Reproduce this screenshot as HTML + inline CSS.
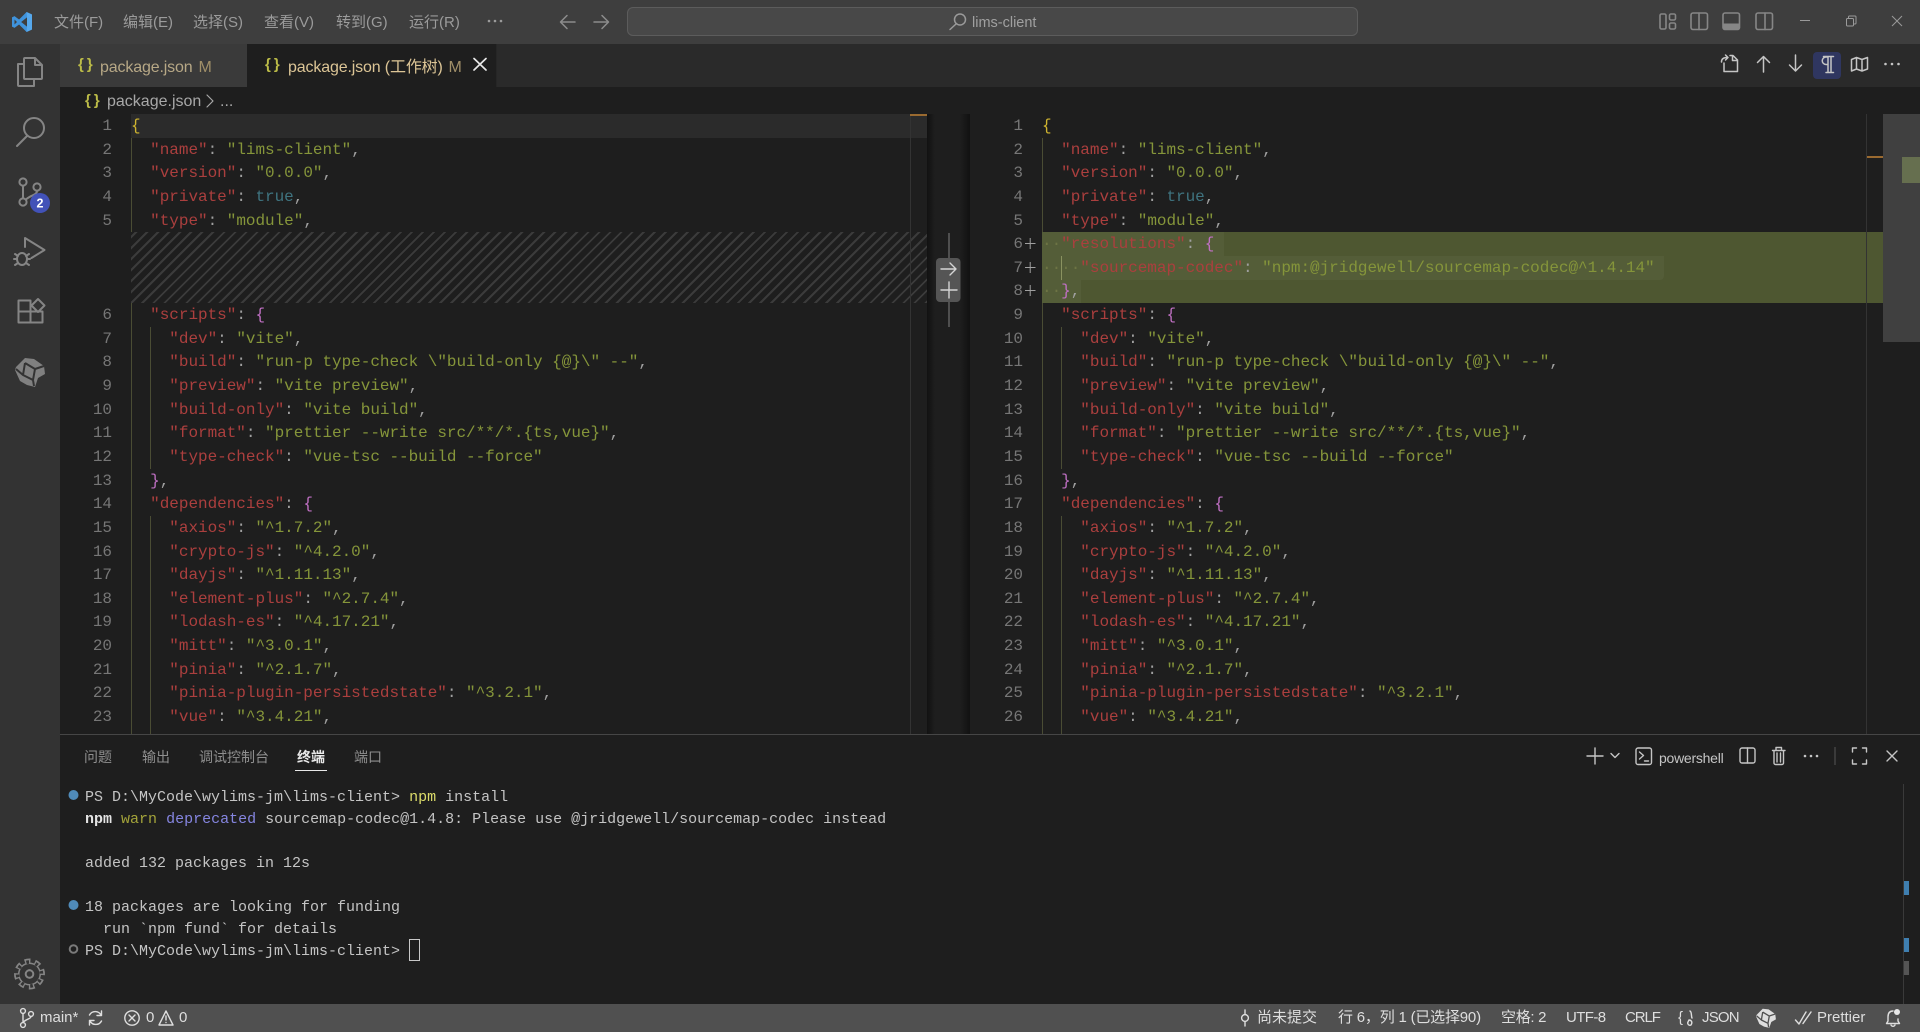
<!DOCTYPE html>
<html lang="zh">
<head>
<meta charset="utf-8">
<title>package.json - lims-client</title>
<style>
html,body{margin:0;padding:0;width:1920px;height:1032px;overflow:hidden;background:#1e1e1e}
body{position:relative;font-family:"Liberation Sans","Noto Sans CJK SC",sans-serif;color:#ccc}
.a{position:absolute;white-space:pre}
#title{left:0;top:0;width:1920px;height:44px;background:#3e3e3e}
#act{left:0;top:44px;width:60px;height:960px;background:#333}
#tabs{left:60px;top:44px;width:1860px;height:43px;background:#2a2a2a}
#t1{left:60px;top:44px;width:187px;height:43px;background:#3a3a3a}
#t2{left:247px;top:44px;width:250px;height:43px;background:#1e1e1e;border-right:1px solid #262626;box-sizing:border-box}
#status{left:0;top:1004px;width:1920px;height:28px;background:#505050}
.m{top:12px;font-size:15px;line-height:22px;color:#9b9b9b}
.tb{top:57px;font-size:16px;line-height:22px}
.br{top:91px;font-size:16px;line-height:22px;color:#a8a8a8}
.ic{font-family:"Liberation Sans",sans-serif;font-weight:bold;font-size:15px;letter-spacing:3px;color:#bcbc48}
.st{top:1007px;font-size:15px;line-height:22px;color:#dedede}
.pt{top:747px;font-size:14px;line-height:20px;color:#8f8f8f}
.ed{position:absolute;top:114px;height:620px;overflow:hidden;font-family:"Liberation Mono",monospace;font-size:16px;letter-spacing:-.03px;color:#a0a0a0}
#L{left:60px;width:867px}
#R{left:970px;width:913px}
.ed p{margin:0;height:23.65px;line-height:23.65px;white-space:pre;position:relative;top:1px}
.ed u{position:absolute;left:0;text-align:right;text-decoration:none;color:#767676}
#L p{padding-left:71px}#L u{width:52px}
#R p{padding-left:72px}#R u{width:53px}
.ed i{font-style:normal;color:#ab3f3e}
.ed b{font-weight:normal;color:#85953a}
.ed em{font-style:normal;color:#3f7480}
.ed s{text-decoration:none;color:#c070c4}
.ed q{quotes:none;color:#6d7444}
.ed .y{color:#d0b530}
.g{position:absolute;width:1px;background:#4a4c34}
#term{left:85px;top:787px;font-family:"Liberation Mono",monospace;font-size:15px;line-height:22px;color:#c4c4c4}
</style>
</head>
<body>
<div class="a" id="title"></div>
<div class="a" style="left:627px;top:7px;width:731px;height:29px;box-sizing:border-box;background:#484848;border:1px solid #5c5c5c;border-radius:6px"></div>
<div class="a" id="act"></div>
<div class="a" id="tabs"></div>
<div class="a" id="t1"></div>
<div class="a" id="t2"></div>

<span class="a m" style="left:54px">文件(F)</span>
<span class="a m" style="left:123px">编辑(E)</span>
<span class="a m" style="left:193px">选择(S)</span>
<span class="a m" style="left:264px">查看(V)</span>
<span class="a m" style="left:336px">转到(G)</span>
<span class="a m" style="left:409px">运行(R)</span>
<span class="a" style="left:972px;top:12px;font-size:14.5px;line-height:22px;color:#a0a0a0">lims-client</span>

<span class="a ic tb" style="left:78px;top:54px">{}</span>
<span class="a tb" style="left:100px;color:#b7a886;letter-spacing:-.15px">package.json</span>
<span class="a tb" style="left:198.5px;color:#a08f68;font-size:16px">M</span>
<span class="a ic tb" style="left:265px;top:54px">{}</span>
<span class="a tb" style="left:288px;color:#dcc596;font-size:16px;letter-spacing:-.15px">package.json (工作树)</span>
<span class="a tb" style="left:448.5px;color:#a08f68;font-size:16px">M</span>
<span class="a ic br" style="left:85px;top:90px">{}</span>
<span class="a br" style="left:107px">package.json</span>
<span class="a br" style="left:220px">...</span>

<!-- left editor backgrounds -->
<div class="a" style="left:131px;top:114px;width:796px;height:24px;background:#2b2b2b"></div>
<div class="a" style="left:131px;top:232px;width:796px;height:71px;background:repeating-linear-gradient(-45deg,#3b3b3b 0 2px,#1e1e1e 2px 7.8px)"></div>
<div class="g" style="left:131px;top:138px;height:94px"></div>
<div class="g" style="left:131px;top:303px;height:431px"></div>
<div class="g" style="left:150px;top:327px;height:142px"></div>
<div class="g" style="left:150px;top:516px;height:218px"></div>
<div class="a" style="left:910px;top:114px;width:1px;height:620px;background:#333"></div>
<div class="a" style="left:910px;top:114px;width:17px;height:2px;background:#9a6a30"></div>
<!-- shadows -->
<div class="a" style="left:927px;top:114px;width:8px;height:620px;background:linear-gradient(90deg,#111,#1e1e1e)"></div>
<div class="a" style="left:960px;top:114px;width:10px;height:620px;background:linear-gradient(270deg,#111,#1e1e1e)"></div>
<!-- right editor backgrounds -->
<div class="a" style="left:1042px;top:232px;width:841px;height:71px;background:#4e5731"></div>
<div class="a" style="left:1042px;top:232px;width:182px;height:24px;background:#545d38"></div>
<div class="a" style="left:1042px;top:256px;width:622px;height:24px;background:#545d38;border-radius:0 0 4px 0"></div>
<div class="a" style="left:1042px;top:280px;width:39px;height:23px;background:#545d38"></div>
<div class="g" style="left:1042px;top:138px;height:94px"></div>
<div class="g" style="left:1042px;top:303px;height:431px"></div>
<div class="g" style="left:1061px;top:327px;height:142px"></div>
<div class="g" style="left:1061px;top:516px;height:218px"></div>
<div class="g" style="left:1061px;top:256px;height:24px;background:#8a9260"></div>
<div class="a" style="left:1866px;top:114px;width:1px;height:620px;background:#333"></div>
<div class="a" style="left:1867px;top:156px;width:16px;height:2px;background:#9a6a30"></div>
<div class="a" style="left:1883px;top:114px;width:37px;height:228px;background:#404040"></div>
<div class="a" style="left:1902px;top:157px;width:18px;height:26px;background:#666f4f"></div>

<div class="ed" id="L">
<p><u>1</u><span class="y">{</span></p>
<p><u>2</u>  <i>"name"</i>: <b>"lims-client"</b>,</p>
<p><u>3</u>  <i>"version"</i>: <b>"0.0.0"</b>,</p>
<p><u>4</u>  <i>"private"</i>: <em>true</em>,</p>
<p><u>5</u>  <i>"type"</i>: <b>"module"</b>,</p>
<p></p><p></p><p></p>
<p><u>6</u>  <i>"scripts"</i>: <s>{</s></p>
<p><u>7</u>    <i>"dev"</i>: <b>"vite"</b>,</p>
<p><u>8</u>    <i>"build"</i>: <b>"run-p type-check \"build-only {@}\" --"</b>,</p>
<p><u>9</u>    <i>"preview"</i>: <b>"vite preview"</b>,</p>
<p><u>10</u>    <i>"build-only"</i>: <b>"vite build"</b>,</p>
<p><u>11</u>    <i>"format"</i>: <b>"prettier --write src/**/*.{ts,vue}"</b>,</p>
<p><u>12</u>    <i>"type-check"</i>: <b>"vue-tsc --build --force"</b></p>
<p><u>13</u>  <s>}</s>,</p>
<p><u>14</u>  <i>"dependencies"</i>: <s>{</s></p>
<p><u>15</u>    <i>"axios"</i>: <b>"^1.7.2"</b>,</p>
<p><u>16</u>    <i>"crypto-js"</i>: <b>"^4.2.0"</b>,</p>
<p><u>17</u>    <i>"dayjs"</i>: <b>"^1.11.13"</b>,</p>
<p><u>18</u>    <i>"element-plus"</i>: <b>"^2.7.4"</b>,</p>
<p><u>19</u>    <i>"lodash-es"</i>: <b>"^4.17.21"</b>,</p>
<p><u>20</u>    <i>"mitt"</i>: <b>"^3.0.1"</b>,</p>
<p><u>21</u>    <i>"pinia"</i>: <b>"^2.1.7"</b>,</p>
<p><u>22</u>    <i>"pinia-plugin-persistedstate"</i>: <b>"^3.2.1"</b>,</p>
<p><u>23</u>    <i>"vue"</i>: <b>"^3.4.21"</b>,</p>
</div>

<div class="ed" id="R">
<p><u>1</u><span class="y">{</span></p>
<p><u>2</u>  <i>"name"</i>: <b>"lims-client"</b>,</p>
<p><u>3</u>  <i>"version"</i>: <b>"0.0.0"</b>,</p>
<p><u>4</u>  <i>"private"</i>: <em>true</em>,</p>
<p><u>5</u>  <i>"type"</i>: <b>"module"</b>,</p>
<p><u>6</u><q>··</q><i>"resolutions"</i>: <s>{</s></p>
<p><u>7</u><q>····</q><i>"sourcemap-codec"</i>: <b>"npm:@jridgewell/sourcemap-codec@^1.4.14"</b></p>
<p><u>8</u><q>··</q><s>}</s>,</p>
<p><u>9</u>  <i>"scripts"</i>: <s>{</s></p>
<p><u>10</u>    <i>"dev"</i>: <b>"vite"</b>,</p>
<p><u>11</u>    <i>"build"</i>: <b>"run-p type-check \"build-only {@}\" --"</b>,</p>
<p><u>12</u>    <i>"preview"</i>: <b>"vite preview"</b>,</p>
<p><u>13</u>    <i>"build-only"</i>: <b>"vite build"</b>,</p>
<p><u>14</u>    <i>"format"</i>: <b>"prettier --write src/**/*.{ts,vue}"</b>,</p>
<p><u>15</u>    <i>"type-check"</i>: <b>"vue-tsc --build --force"</b></p>
<p><u>16</u>  <s>}</s>,</p>
<p><u>17</u>  <i>"dependencies"</i>: <s>{</s></p>
<p><u>18</u>    <i>"axios"</i>: <b>"^1.7.2"</b>,</p>
<p><u>19</u>    <i>"crypto-js"</i>: <b>"^4.2.0"</b>,</p>
<p><u>20</u>    <i>"dayjs"</i>: <b>"^1.11.13"</b>,</p>
<p><u>21</u>    <i>"element-plus"</i>: <b>"^2.7.4"</b>,</p>
<p><u>22</u>    <i>"lodash-es"</i>: <b>"^4.17.21"</b>,</p>
<p><u>23</u>    <i>"mitt"</i>: <b>"^3.0.1"</b>,</p>
<p><u>24</u>    <i>"pinia"</i>: <b>"^2.1.7"</b>,</p>
<p><u>25</u>    <i>"pinia-plugin-persistedstate"</i>: <b>"^3.2.1"</b>,</p>
<p><u>26</u>    <i>"vue"</i>: <b>"^3.4.21"</b>,</p>
</div>

<!-- panel -->
<div class="a" style="left:60px;top:734px;width:1860px;height:270px;background:#1e1e1e;border-top:1px solid #464646;box-sizing:border-box"></div>
<span class="a pt" style="left:84px">问题</span>
<span class="a pt" style="left:142px">输出</span>
<span class="a pt" style="left:199px">调试控制台</span>
<span class="a pt" style="left:297px;color:#e8e8e8;font-weight:bold">终端</span>
<span class="a pt" style="left:354px">端口</span>
<div class="a" style="left:295px;top:770px;width:32px;height:1px;background:#e8e8e8"></div>
<span class="a" style="left:1659px;top:748px;font-size:14px;line-height:20px;letter-spacing:-.25px;color:#c5c5c5">powershell</span>

<div class="a" id="term">PS D:\MyCode\wylims-jm\lims-client&gt; <span style="color:#dcdc6a">npm</span> install
<b style="color:#e4e4e4">npm</b> <span style="color:#a3a33a">warn</span> <span style="color:#8585e0">deprecated</span> sourcemap-codec@1.4.8: Please use @jridgewell/sourcemap-codec instead

added 132 packages in 12s

18 packages are looking for funding
  run `npm fund` for details
PS D:\MyCode\wylims-jm\lims-client&gt; </div>
<div class="a" style="left:409px;top:939px;width:9px;height:20px;border:1px solid #c8c8c8"></div>
<div class="a" style="left:1903px;top:784px;width:1px;height:220px;background:#3a3a3a"></div>
<div class="a" style="left:1904px;top:881px;width:5px;height:14px;background:#3f7fb0"></div>
<div class="a" style="left:1904px;top:938px;width:5px;height:14px;background:#3f7fb0"></div>
<div class="a" style="left:1904px;top:961px;width:5px;height:14px;background:#555"></div>

<!-- status -->
<div class="a" id="status"></div>
<span class="a st" style="left:40px">main*</span>
<span class="a st" style="left:146px">0</span>
<span class="a st" style="left:179px">0</span>
<span class="a st" style="left:1257px">尚未提交</span>
<span class="a st" style="left:1338px;letter-spacing:-.2px">行 6，列 1 (已选择90)</span>
<span class="a st" style="left:1501px;letter-spacing:-.3px">空格: 2</span>
<span class="a st" style="left:1566px;letter-spacing:-.6px">UTF-8</span>
<span class="a st" style="left:1625px;letter-spacing:-1.1px">CRLF</span>
<span class="a st" style="left:1678px">{</span>
<span class="a st" style="left:1702px;letter-spacing:-.8px">JSON</span>
<span class="a st" style="left:1817px">Prettier</span>

<svg class="a" style="left:0;top:0" width="1920" height="1032" viewBox="0 0 1920 1032" fill="none" stroke-linecap="round" stroke-linejoin="round">
<defs>
<g id="tn"><path d="M-14 -5 L-5 -14 L4 -13 L14 -6 L15 2 L8 6 L5 15 L-3 13 L-10 9 L-15 -2 Z" fill="currentColor" stroke="none"/><path d="M-5 -9 L5 -3 L3 8 M-5 -9 L-7 3 L3 8 M5 -3 L14 -6 M-7 3 L-14 -3 M3 8 L4 14" fill="none" stroke-width="2" stroke-linecap="butt"/></g>
</defs>
<!-- vscode logo -->
<g transform="translate(12,12) scale(.8333)">
<path fill-rule="evenodd" d="M17.5 0 L8.5 9 L3 5 L0 6.5 V17.5 L3 19 L8.5 15 L17.5 24 L24 21 V3 Z M18 6.5 V17.5 L11 12 Z M3 9 L6 12 L3 15 Z" fill="#3f93dc"/>
<path d="M17.5 0 L24 3 V21 L17.5 24 L18 17.5 V6.5 Z" fill="#56a8ec"/>
</g>
<!-- title icons -->
<g fill="#9b9b9b"><circle cx="489" cy="21" r="1.3"/><circle cx="495" cy="21" r="1.3"/><circle cx="501" cy="21" r="1.3"/></g>
<g stroke="#8c8c8c" stroke-width="1.5">
<path d="M575 22 H561 M567 15.5 L560.5 22 L567 28.5"/>
<path d="M594 22 H608 M602 15.5 L608.5 22 L602 28.5"/>
</g>
<g stroke="#9a9a9a" stroke-width="1.5"><circle cx="960" cy="19.5" r="5.5"/><path d="M956 24 L950 29.5"/></g>
<g stroke="#868686" stroke-width="1.6">
<rect x="1660" y="14" width="6" height="15" rx="1.5"/><rect x="1669.5" y="14" width="6" height="6" rx="1.5"/><rect x="1669.5" y="23" width="6" height="6" rx="1.5"/>
<rect x="1691" y="13" width="16.5" height="16.5" rx="2"/><path d="M1699 13 V29.5"/>
<rect x="1723" y="13" width="16.5" height="16.5" rx="2"/>
<rect x="1756" y="13" width="16.5" height="16.5" rx="2"/><path d="M1765 13 V29.5"/>
</g>
<path d="M1723 23.5 H1739.5 V28 a1.5 1.5 0 0 1 -1.5 1.5 H1724.5 a1.5 1.5 0 0 1 -1.5 -1.5 Z" fill="#868686"/>
<g stroke="#9a9a9a" stroke-width="1" stroke-linecap="butt">
<path d="M1800 20.5 H1810"/>
<rect x="1846.5" y="18.5" width="7" height="7.5" rx="1"/><path d="M1848.5 18 V17 a1 1 0 0 1 1 -1 H1855 a1 1 0 0 1 1 1 V23 a1 1 0 0 1 -1 1 H1854"/>
<path d="M1892 16 L1902 26 M1902 16 L1892 26"/>
</g>
<!-- activity bar -->
<g stroke="#858585" stroke-width="2">
<path d="M24 64 H18 V85 a1 1 0 0 0 1 1 H34 V79"/>
<path d="M25 58 H35 L42 65 V78 a1 1 0 0 1 -1 1 H25 a1 1 0 0 1 -1 -1 V59 a1 1 0 0 1 1 -1 Z M35 58 V65 H42"/>
<circle cx="34" cy="128" r="10"/><path d="M27 136 L17 146"/>
<circle cx="23" cy="182" r="3.6"/><circle cx="37" cy="187" r="3.6"/><circle cx="23" cy="202" r="3.6"/>
<path d="M23 186 V198 M37 191 C37 195 31 195 26.5 199"/>
<path d="M25 247 V238 L44.5 250 L31.5 258"/>
<ellipse cx="22" cy="259" rx="5" ry="6"/><path d="M15 254 L18 256 M29 254 L26 256 M14 259 H17 M30 259 H27 M15 265 L18 263 M29 265 L26 263"/>
<path d="M18.5 300.5 H30.5 V322.5 H18.5 Z M18.5 311.5 H42.5 V322.5 H30.5"/>
<path d="M38 299 L44.5 305.5 L38 312 L31.5 305.5 Z"/>
</g>
<use href="#tn" x="30" y="372" style="color:#808080" stroke="#333"/>
<circle cx="40" cy="203" r="10" fill="#4252b8"/>
<text x="40" y="207.5" font-family="Liberation Sans,sans-serif" font-weight="bold" font-size="12.5" fill="#fff" text-anchor="middle">2</text>
<!-- gear -->
<g transform="rotate(22.5 29.5 974)">
<circle cx="29.5" cy="974" r="13" stroke="#858585" stroke-width="5" stroke-dasharray="5.6 4.61" stroke-linecap="butt"/>
<circle cx="29.5" cy="974" r="11.5" fill="#858585"/>
<circle cx="29.5" cy="974" r="12" stroke="#333" stroke-width="3.5" stroke-dasharray="2.64 6.78" stroke-dashoffset="-1.26" stroke-linecap="butt"/>
<circle cx="29.5" cy="974" r="10" fill="#333"/>
<circle cx="29.5" cy="974" r="3.8" stroke="#858585" stroke-width="2"/>
</g>
<!-- tab / breadcrumb -->
<path d="M474 58.5 L486 70 M486 58.5 L474 70" stroke="#e8e8e8" stroke-width="1.7"/>
<path d="M207 95 L213 101 L207 107" stroke="#a8a8a8" stroke-width="1.2"/>
<!-- editor actions -->
<rect x="1813" y="52" width="28" height="27" rx="4" fill="#2f3660"/>
<g stroke="#c5c5c5" stroke-width="1.5">
<path d="M1730 55.5 H1733 L1737.5 60 V71.5 H1724 V63 M1737.5 60.5 H1732.5 V55.5"/>
<path d="M1721.5 62 c0 -3 2 -4.5 5.5 -4.5 M1725.5 55 L1728 57.5 L1725.5 60"/>
<path d="M1763.5 72 V56.5 M1757.5 62.5 L1763.5 56.5 L1769.5 62.5"/>
<path d="M1795.5 55 V71 M1789.5 65 L1795.5 71 L1801.5 65"/>
<path d="M1823.5 56.5 H1833.5 M1828 56.5 V72 M1831 56.5 V72 M1826 72.5 H1833.5 M1828 57 H1826 a3.7 3.7 0 0 0 0 7.5 H1828"/>
<path d="M1851.5 59.5 L1856.5 57.5 L1862 59.5 L1867.5 57.5 V69 L1862 71 L1856.5 69 L1851.5 71 Z M1856.5 57.5 V69 M1862 59.5 V71"/>
</g>
<g fill="#c5c5c5"><circle cx="1885.5" cy="64" r="1.3"/><circle cx="1892" cy="64" r="1.3"/><circle cx="1898.5" cy="64" r="1.3"/></g>
<!-- diff gutter widgets -->
<path d="M949 233 V258 M949 302 V327" stroke="#6a6a6a" stroke-width="1.3" stroke-linecap="butt"/>
<rect x="936" y="258" width="24.5" height="44" rx="4" fill="#555"/>
<path d="M941 269 H956 M950 263 L956 269 L950 275 M941 290 H957 M949 282 V298" stroke="#d5d5d5" stroke-width="1.4"/>
<path d="M1025 243.5 H1035.5 M1030.2 238 V249 M1025 267.5 H1035.5 M1030.2 262 V273 M1025 290.5 H1035.5 M1030.2 285 V296" stroke="#a0a0a0" stroke-width="1" stroke-linecap="butt"/>
<!-- terminal decorations -->
<circle cx="73.5" cy="795" r="5" fill="#4f8ab8"/>
<circle cx="73.5" cy="905" r="5" fill="#4f8ab8"/>
<circle cx="73.5" cy="949" r="3.8" stroke="#7a7a7a" stroke-width="2"/>
<!-- panel actions -->
<g stroke="#c5c5c5" stroke-width="1.4">
<path d="M1587 756 H1603 M1595 748 V764"/>
<path d="M1611 753.5 L1615 757.5 L1619 753.5"/>
<rect x="1636" y="748" width="15.5" height="16.5" rx="2"/><path d="M1639.5 752 L1643.5 755.5 L1639.5 759 M1644.5 761 H1648.5"/>
<rect x="1740" y="748" width="15" height="15" rx="2"/><path d="M1747.5 748 V763"/>
<path d="M1772.5 750.5 H1785 M1776 750 V747.5 H1781.5 V750 M1774 751 V763 a1.5 1.5 0 0 0 1.5 1.5 H1782 a1.5 1.5 0 0 0 1.5 -1.5 V751 M1777 753 V762 M1780.5 753 V762"/>
<path d="M1852.5 752 V748 H1856.5 M1862.5 748 H1866.5 V752 M1866.5 760 V764 H1862.5 M1856.5 764 H1852.5 V760"/>
<path d="M1887 751 L1897 761 M1897 751 L1887 761"/>
</g>
<g fill="#c5c5c5"><circle cx="1805" cy="756" r="1.3"/><circle cx="1811" cy="756" r="1.3"/><circle cx="1817" cy="756" r="1.3"/></g>
<path d="M1835 747 V765" stroke="#555" stroke-width="1" stroke-linecap="butt"/>
<!-- status icons -->
<g stroke="#dedede" stroke-width="1.4">
<circle cx="23" cy="1011" r="2.4"/><circle cx="31" cy="1014" r="2.4"/><circle cx="23" cy="1025" r="2.4"/>
<path d="M23 1013.5 V1022.5 M31 1016.5 C31 1019 26 1019 23.5 1022"/>
<path d="M89.5 1015 A6.5 6.5 0 0 1 101 1015 M101.5 1021 A6.5 6.5 0 0 1 90 1021 M101.5 1011 V1015.5 H97 M89.5 1025 V1020.5 H94"/>
<circle cx="132" cy="1018" r="7.2"/><path d="M129 1015 L135 1021 M135 1015 L129 1021"/>
<path d="M166 1011 L173 1025 H159 Z M166 1016 V1020 M166 1022.5 V1022.6"/>
<circle cx="1245" cy="1018" r="3.4"/><path d="M1245 1010 V1014.5 M1245 1021.5 V1026"/>
<path d="M1690 1011 C1692 1012 1691 1016 1692 1018 M1689 1020 C1691 1020 1693 1022 1691 1025 C1689 1026 1687 1024 1688 1022 Z"/>
<path d="M1795.5 1020 L1799 1024 L1806 1012 M1803 1023.5 L1811 1012"/>
<path d="M1893 1011 C1889 1011 1888 1014 1888 1017 V1021 L1886.5 1023.5 H1899.5 L1898 1021 V1019 M1891 1025 a2.2 2.2 0 0 0 4 0"/>
</g>
<circle cx="1897" cy="1012" r="3" fill="#e8e8e8"/>
<use href="#tn" transform="translate(1766,1018) scale(.66)" style="color:#dedede" stroke="#505050"/>
</svg>
</body>
</html>
